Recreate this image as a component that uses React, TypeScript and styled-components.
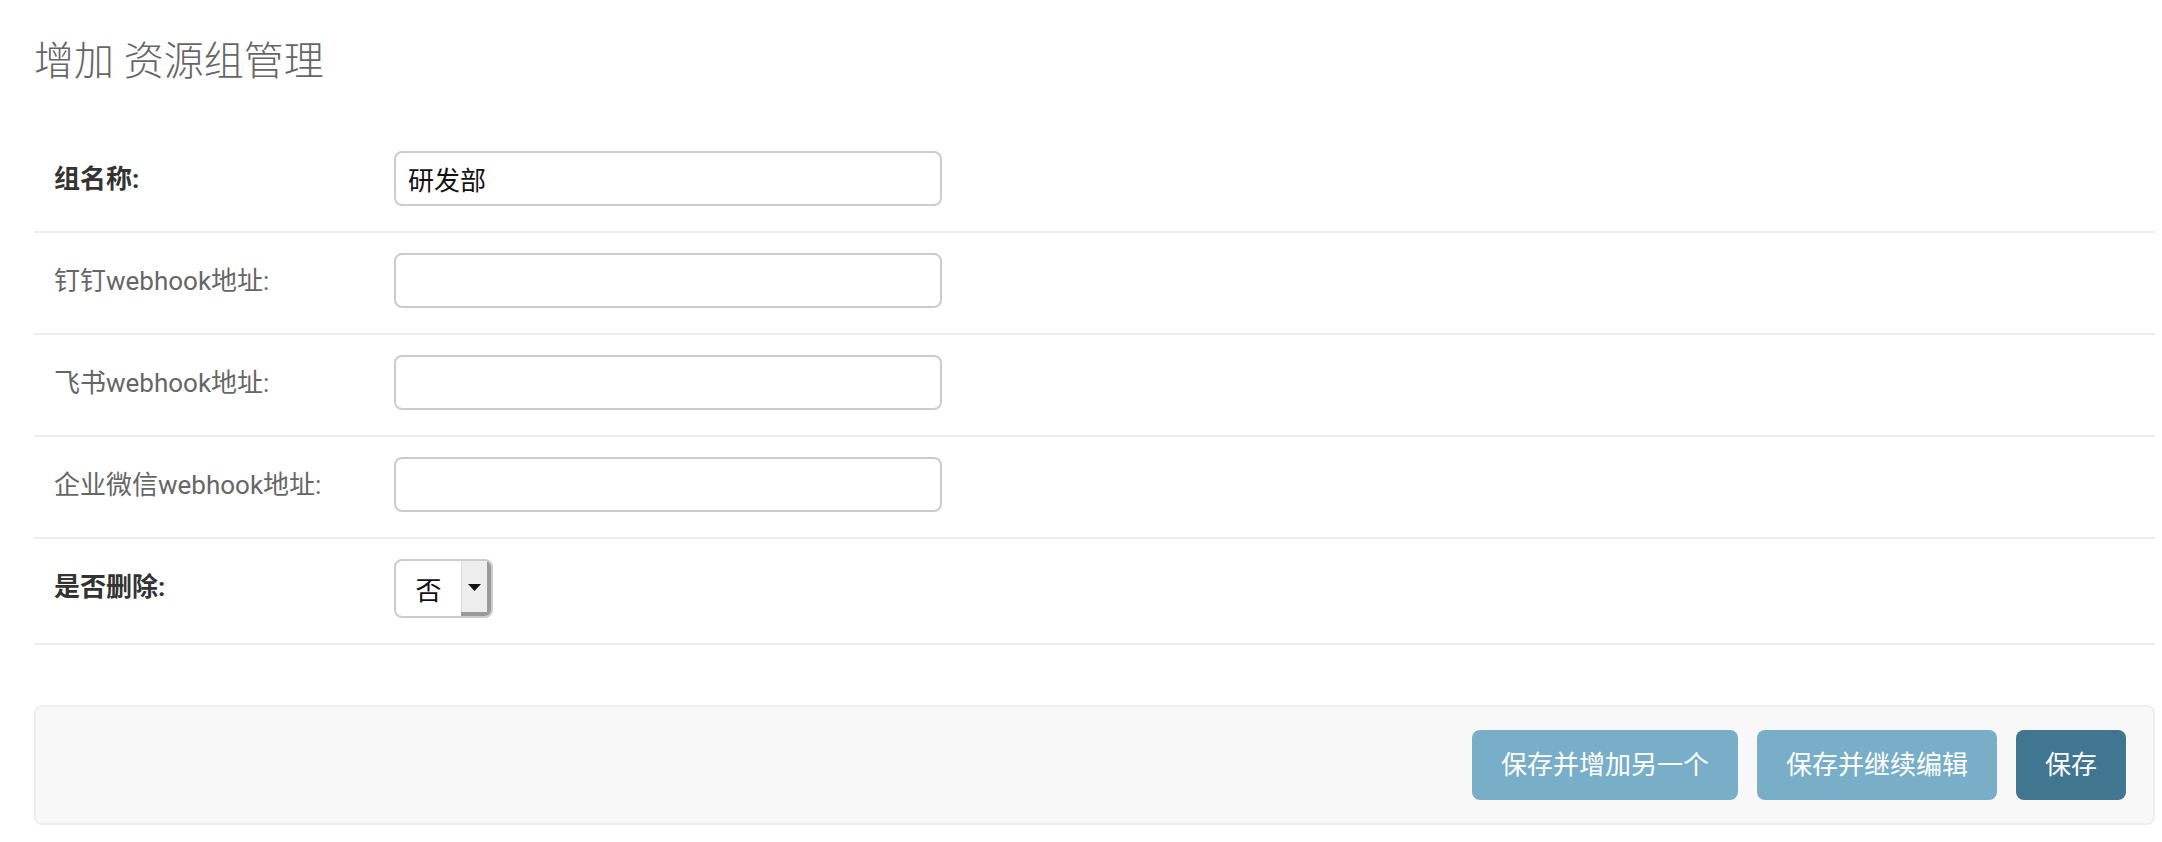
import styled, { createGlobalStyle } from "styled-components";

const GlobalStyle = createGlobalStyle`
  html, body {
    margin: 0;
    padding: 0;
    background: #fff;
  }
  body {
    font-family: Roboto, "Noto Sans CJK SC", "DejaVu Sans", sans-serif;
    color: #333;
  }
`;

const Page = styled.div`
  padding: 38px 7px 0 34px;
`;

const Title = styled.h1`
  margin: 0 0 45px;
  font-size: 40px;
  line-height: 48px;
  font-weight: 300;
  color: #666;
`;

const Fieldset = styled.div`
  display: flex;
  flex-direction: column;
`;

const FormRow = styled.div`
  display: flex;
  align-items: flex-start;
  padding: 20px 20px 25px;
  border-bottom: 2px solid #eee;
`;

const Label = styled.label<{ $required?: boolean }>`
  flex: 0 0 340px;
  padding-top: 11px;
  font-size: 26px;
  line-height: 34px;
  font-weight: ${(p) => (p.$required ? 700 : 400)};
  color: ${(p) => (p.$required ? "#333" : "#666")};
`;

const TextInput = styled.input`
  box-sizing: border-box;
  width: 548px;
  height: 55px;
  margin: 0;
  padding: 0 12px;
  border: 2px solid #ccc;
  border-radius: 8px;
  background: #fff;
  font-family: inherit;
  font-size: 26px;
  color: #111;
  outline: none;
`;

const SelectBox = styled.div`
  box-sizing: border-box;
  display: flex;
  width: 99px;
  height: 59px;
  border: 2px solid #ccc;
  border-radius: 8px;
  overflow: hidden;
  background: #fff;
`;

const SelectValue = styled.div`
  flex: 1;
  display: flex;
  align-items: center;
  justify-content: center;
  font-size: 26px;
  color: #111;
`;

const SelectArrow = styled.div`
  flex: 0 0 30px;
  display: flex;
  align-items: center;
  justify-content: center;
  padding-right: 4px;
  padding-bottom: 3px;
  box-sizing: border-box;
  background: #ededed;
  box-shadow: inset -4px -4px 0 #9a9a9a, inset 1px 0 0 #dcdcdc;
`;

const SubmitRow = styled.div`
  display: flex;
  justify-content: flex-end;
  gap: 19px;
  margin-top: 60px;
  padding: 23px 27px;
  border: 2px solid #eee;
  border-radius: 8px;
  background: #f8f8f8;
`;

const Button = styled.button<{ $primary?: boolean }>`
  height: 70px;
  padding: 0 29px;
  border: none;
  border-radius: 8px;
  background: ${(p) => (p.$primary ? "#417690" : "#79aec8")};
  color: #fff;
  font-family: inherit;
  font-size: 26px;
  line-height: 30px;
  cursor: pointer;
`;

const fields = [
  { label: "钉钉webhook地址:", value: "" },
  { label: "飞书webhook地址:", value: "" },
  { label: "企业微信webhook地址:", value: "" },
];

export default function App() {
  return (
    <Page>
      <GlobalStyle />
      <Title>增加 资源组管理</Title>
      <Fieldset>
        <FormRow>
          <Label $required>组名称:</Label>
          <TextInput defaultValue="研发部" />
        </FormRow>
        {fields.map((f) => (
          <FormRow key={f.label}>
            <Label>{f.label}</Label>
            <TextInput defaultValue={f.value} />
          </FormRow>
        ))}
        <FormRow>
          <Label $required>是否删除:</Label>
          <SelectBox>
            <SelectValue>否</SelectValue>
            <SelectArrow>
              <svg width="13" height="7" viewBox="0 0 13 7">
                <polygon points="0,0 13,0 6.5,7" fill="#111" />
              </svg>
            </SelectArrow>
          </SelectBox>
        </FormRow>
      </Fieldset>
      <SubmitRow>
        <Button>保存并增加另一个</Button>
        <Button>保存并继续编辑</Button>
        <Button $primary>保存</Button>
      </SubmitRow>
    </Page>
  );
}
